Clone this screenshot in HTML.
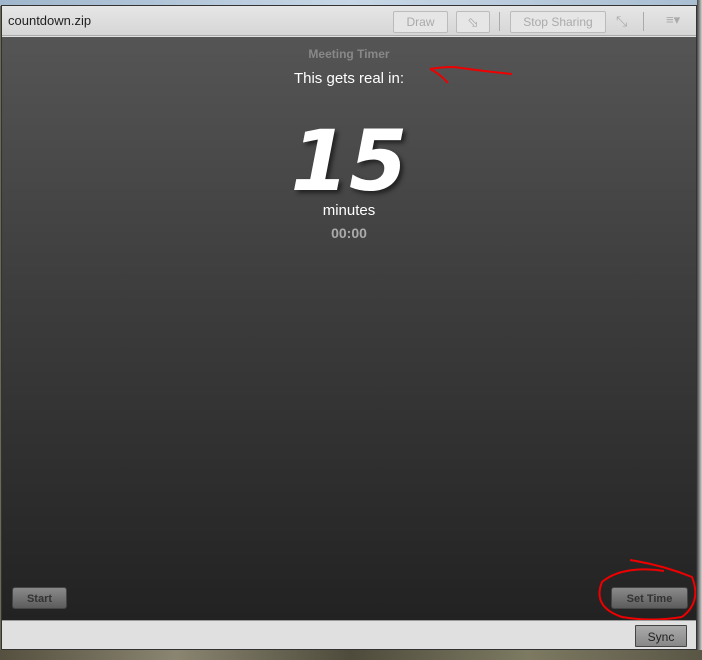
<!DOCTYPE html>
<html><head><style>
*{margin:0;padding:0;box-sizing:border-box}
body{width:702px;height:660px;background:#6b6a55;position:relative;overflow:hidden;font-family:"Liberation Sans",sans-serif}
.top{position:absolute;left:0;top:0;width:702px;height:6px;background:linear-gradient(90deg,#9fb6cc,#c7d7e6,#a9bed2)}
.win{position:absolute;left:1px;top:5px;width:696px;height:645px;border:1px solid #333;background:#e0e0e0}
.hdr{position:absolute;left:0;top:0;width:694px;height:30px;background:linear-gradient(#e6e6e6,#d6d6d6);border-bottom:1px solid #aaa}
.title{position:absolute;left:6px;top:7px;font-size:13px;color:#222}
.btn{position:absolute;top:5px;height:22px;border:1px solid #bbb;border-radius:2px;background:#e6e6e6;color:#aaa;font-size:12px;text-align:center;line-height:20px}
.sep{position:absolute;top:6px;width:1px;height:19px;background:#aaa}
.content{position:absolute;left:0;top:31px;width:694px;height:583px;background:linear-gradient(#555 0%,#3f3f3f 40%,#222 100%)}
.c{position:absolute;width:694px;text-align:center}
.gb{position:absolute;height:22px;border-radius:3px;background:linear-gradient(#8a8a8a,#5c5c5c);color:#333;font-weight:bold;font-size:11px;text-align:center;line-height:22px;border:1px solid #444}
.ftr{position:absolute;left:0;top:614px;width:694px;height:29px;background:#e0e0e0;border-top:1px solid #999}
.bot{position:absolute;left:0;top:650px;width:702px;height:10px;background:linear-gradient(90deg,#55503f,#8a8570,#4e4b3c,#7d7a62,#5a5646)}
.rt{position:absolute;left:697px;top:0;width:5px;height:660px;background:linear-gradient(90deg,#444,#cfd3cf)}
</style></head><body>
<div class="top"></div><div class="rt"></div><div class="bot"></div>
<div class="win">
 <div class="hdr">
  <div class="title">countdown.zip</div>
  <div class="btn" style="left:391px;width:55px">Draw</div>
  <div class="btn" style="left:454px;width:34px;font-size:14px">⬂</div>
  <div class="sep" style="left:497px"></div>
  <div class="btn" style="left:508px;width:96px">Stop Sharing</div>
  <div style="position:absolute;left:614px;top:7px;font-size:14px;color:#aaa">⤡</div>
  <div class="sep" style="left:641px"></div>
  <div style="position:absolute;left:664px;top:6px;font-size:13px;color:#aaa">≡▾</div>
 </div>
 <div class="content">
  <div class="c" style="top:10px;font-size:12px;font-weight:bold;color:#888">Meeting Timer</div>
  <div class="c" style="top:33px;font-size:15px;color:#fff">This gets real in:</div>
  <div class="c" style="top:74px;font-family:'DejaVu Sans',sans-serif;font-size:84px;font-weight:bold;font-style:italic;color:#fff;text-shadow:3px 3px 4px #222;line-height:100px">15</div>
  <div class="c" style="top:165px;font-size:15px;color:#fff">minutes</div>
  <div class="c" style="top:188px;font-size:14px;font-weight:bold;color:#aaa">00:00</div>
  <div class="gb" style="left:10px;top:550px;width:55px">Start</div>
  <div class="gb" style="left:609px;top:550px;width:77px">Set Time</div>
  <svg width="694" height="583" style="position:absolute;left:0;top:0">
   <path d="M428 32 Q440 30 452 30 Q480 34 510 37 M428 32 Q437 36 446 46" stroke="#e00" stroke-width="2" fill="none"/>
   <path d="M628 523 Q660 528 690 540 Q700 565 680 580 M662 534 Q620 528 600 545 Q590 570 620 580 Q650 585 680 580" stroke="#e00" stroke-width="2" fill="none"/>
  </svg>
 </div>
 <div class="ftr">
  <div class="gb" style="left:633px;top:4px;width:52px;background:linear-gradient(#aaa,#888);color:#222;font-weight:normal;font-size:12px;border-radius:1px">Sync</div>
 </div>
</div>
</body></html>
